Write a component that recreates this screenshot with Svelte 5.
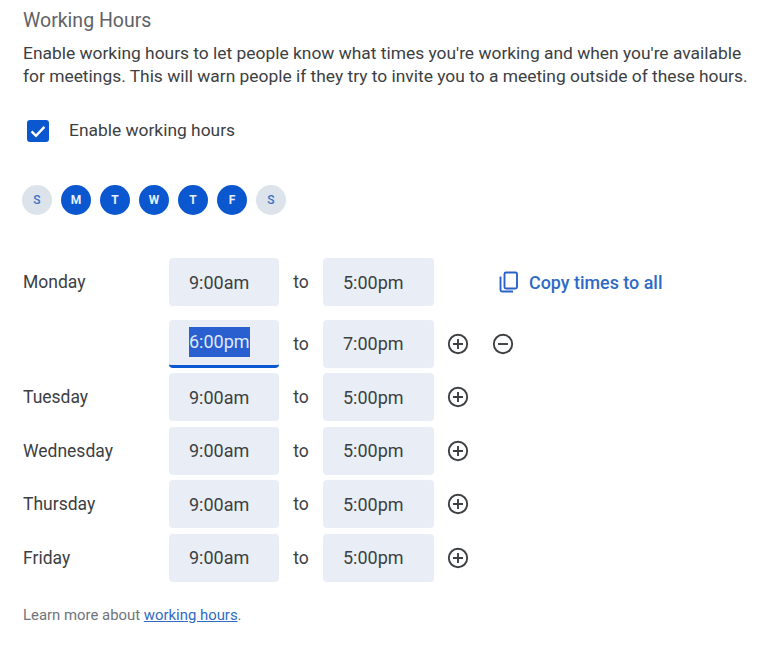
<script lang="ts">
  const days = [
    { label: 'S', on: false },
    { label: 'M', on: true },
    { label: 'T', on: true },
    { label: 'W', on: true },
    { label: 'T', on: true },
    { label: 'F', on: true },
    { label: 'S', on: false },
  ];

  const rows = [
    { day: 'Monday', from: '9:00am', to: '5:00pm', copy: true, cls: 'first' },
    { day: '', from: '6:00pm', to: '7:00pm', selected: true, add: true, remove: true, cls: 'second' },
    { day: 'Tuesday', from: '9:00am', to: '5:00pm', add: true },
    { day: 'Wednesday', from: '9:00am', to: '5:00pm', add: true },
    { day: 'Thursday', from: '9:00am', to: '5:00pm', add: true },
    { day: 'Friday', from: '9:00am', to: '5:00pm', add: true },
  ];
</script>

<main class="page">
  <h1>Working Hours</h1>
  <p class="intro">
    Enable working hours to let people know what times you're working and when you're available
    for meetings. This will warn people if they try to invite you to a meeting outside of these hours.
  </p>

  <label class="enable">
    <span class="checkbox">
      <svg viewBox="0 0 24 24" width="22" height="22" aria-hidden="true">
        <path d="M5 12.500l4.800 4.800 9.200-9.800" fill="none" stroke="#fff" stroke-width="2.600" />
      </svg>
    </span>
    <span class="enable-text">Enable working hours</span>
  </label>

  <div class="days">
    {#each days as d}
      <span class="day" class:on={d.on}>{d.label}</span>
    {/each}
  </div>

  <div class="rows">
    {#each rows as r}
      <div class="row {r.cls ?? ''}">
        <span class="name">{r.day}</span>
        <div class="field" class:focused={r.selected}>
          {#if r.selected}
            <span class="selection">{r.from}</span>
          {:else}
            {r.from}
          {/if}
        </div>
        <span class="sep">to</span>
        <div class="field end">{r.to}</div>
        <div class="actions">
          {#if r.add}
            <button type="button" class="icon-btn" aria-label="Add time">
              <svg viewBox="0 0 24 24" width="24" height="24">
                <circle cx="12" cy="12" r="9.200" fill="none" stroke="#3c4043" stroke-width="1.900" />
                <path d="M12 7v10M7 12h10" fill="none" stroke="#3c4043" stroke-width="1.900" />
              </svg>
            </button>
          {/if}
          {#if r.remove}
            <button type="button" class="icon-btn" aria-label="Remove time">
              <svg viewBox="0 0 24 24" width="24" height="24">
                <circle cx="12" cy="12" r="9.200" fill="none" stroke="#3c4043" stroke-width="1.900" />
                <path d="M7 12h10" fill="none" stroke="#3c4043" stroke-width="1.900" />
              </svg>
            </button>
          {/if}
          {#if r.copy}
            <button type="button" class="copy">
              <svg viewBox="0 0 24 24" width="24" height="24" aria-hidden="true">
                <path d="M9 2.500h9.500a1.500 1.500 0 0 1 1.500 1.500v13a1.500 1.500 0 0 1-1.500 1.500H9A1.500 1.500 0 0 1 7.500 17V4A1.500 1.500 0 0 1 9 2.500z" fill="none" stroke="#2a63c6" stroke-width="1.900" />
                <path d="M3.500 6.500V20A1.500 1.500 0 0 0 5 21.500h11" fill="none" stroke="#2a63c6" stroke-width="1.900" />
              </svg>
              Copy times to all
            </button>
          {/if}
        </div>
      </div>
    {/each}
  </div>

  <p class="learn">Learn more about <a href="#working-hours">working hours</a>.</p>
</main>

<style>
  :global(body) {
    margin: 0;
    background: #fff;
  }

  .page {
    width: 768px;
    height: 645px;
    box-sizing: border-box;
    padding: 10px 0 0 23px;
    overflow: hidden;
    font-family: Roboto, "Liberation Sans", sans-serif;
    color: #3c4043;
  }

  h1 {
    margin: 0;
    font-size: 19.500px;
    line-height: 22px;
    font-weight: 400;
    color: #5f6368;
  }

  .intro {
    margin: 10px 0 0;
    width: 740px;
    font-size: 17.400px;
    line-height: 23px;
  }

  .enable {
    display: flex;
    align-items: center;
    gap: 20px;
    margin: 32px 0 0 4px;
    height: 22px;
    font-size: 17.400px;
  }

  .enable-text {
    margin-bottom: 2px;
  }

  .checkbox {
    display: flex;
    align-items: center;
    justify-content: center;
    width: 22px;
    height: 22px;
    border-radius: 3px;
    background: #0b57d0;
  }

  .days {
    display: flex;
    gap: 9px;
    margin: 43px 0 0 -1px;
  }

  .day {
    display: flex;
    align-items: center;
    justify-content: center;
    width: 30px;
    height: 30px;
    border-radius: 50%;
    font-size: 12px;
    font-weight: 500;
    background: #dde3ea;
    color: #3b72c4;
  }

  .day.on {
    background: #0b57d0;
    color: #e8f0fe;
    font-weight: 700;
  }

  .rows {
    display: flex;
    flex-direction: column;
    gap: 5.500px;
    margin-top: 43px;
  }

  .row {
    display: flex;
    align-items: center;
    height: 48px;
    font-size: 17.500px;
  }

  .row.first {
    margin-bottom: 8px;
  }

  .name {
    width: 146px;
  }

  .field {
    display: flex;
    align-items: center;
    box-sizing: border-box;
    width: 110px;
    height: 48px;
    padding-left: 20px;
    border-radius: 4px;
    background: #e9eef6;
    font-size: 18px;
  }

  .field.end {
    width: 111px;
  }

  .field.focused {
    border-bottom: 3px solid #0b57d0;
  }

  .selection {
    background: #2a5fd0;
    color: #dfe9fb;
    line-height: 30px;
  }

  .sep {
    width: 44px;
    text-align: center;
  }

  .actions {
    display: flex;
    align-items: center;
    gap: 21px;
    margin-left: 12px;
  }

  .icon-btn {
    display: flex;
    padding: 0;
    border: 0;
    background: none;
  }

  .copy {
    display: flex;
    align-items: center;
    gap: 8px;
    margin-left: 51px;
    padding: 0;
    border: 0;
    background: none;
    font: inherit;
    font-size: 17.900px;
    font-weight: 500;
    color: #2f6bc5;
  }

  .learn {
    margin: 23px 0 0;
    font-size: 14.900px;
    line-height: 20px;
    color: #6f7478;
  }

  .learn a {
    color: #2f6bc5;
  }
</style>
